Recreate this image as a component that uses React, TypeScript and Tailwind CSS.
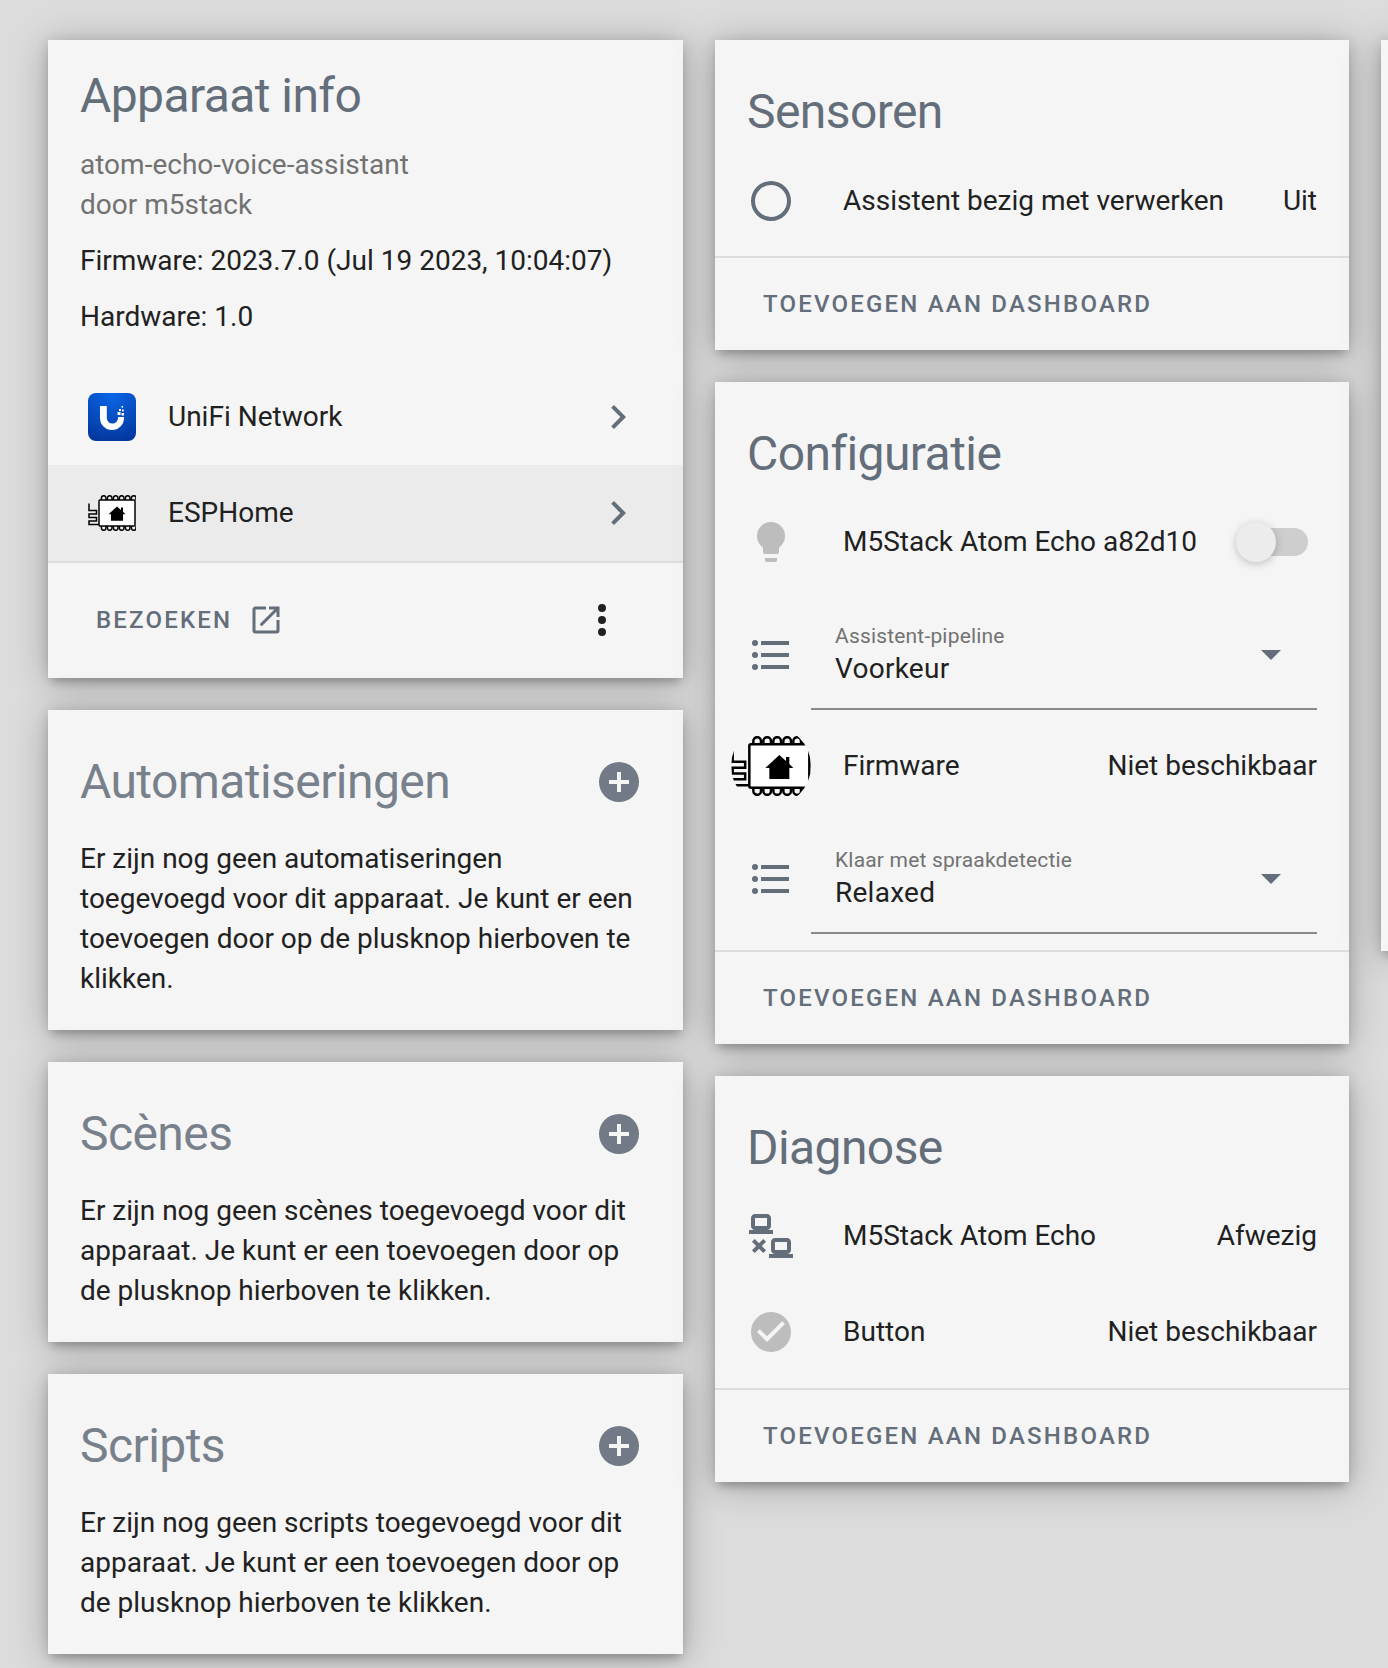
import React from 'react';

const mdi = {
  chevron: 'M8.59,16.58L13.17,12L8.59,7.41L10,6L16,12L10,18L8.59,16.58Z',
  openNew: 'M14,3V5H17.59L7.76,14.83L9.17,16.24L19,6.41V10H21V3M19,19H5V5H12V3H5C3.89,3 3,3.9 3,5V19A2,2 0 0,0 5,21H19A2,2 0 0,0 21,19V12H19V19Z',
  dots: 'M12,16A2,2 0 0,1 14,18A2,2 0 0,1 12,20A2,2 0 0,1 10,18A2,2 0 0,1 12,16M12,10A2,2 0 0,1 14,12A2,2 0 0,1 12,14A2,2 0 0,1 10,12A2,2 0 0,1 12,10M12,4A2,2 0 0,1 14,6A2,2 0 0,1 12,8A2,2 0 0,1 10,6A2,2 0 0,1 12,4Z',
  plus: 'M17,13H13V17H11V13H7V11H11V7H13V11H17M12,2A10,10 0 0,0 2,12A10,10 0 0,0 12,22A10,10 0 0,0 22,12A10,10 0 0,0 12,2Z',
  circle: 'M12,20A8,8 0 0,1 4,12A8,8 0 0,1 12,4A8,8 0 0,1 20,12A8,8 0 0,1 12,20M12,2A10,10 0 0,0 2,12A10,10 0 0,0 12,22A10,10 0 0,0 22,12A10,10 0 0,0 12,2Z',
  bulb: 'M12,2A7,7 0 0,0 5,9C5,11.38 6.19,13.47 8,14.74V17A1,1 0 0,0 9,18H15A1,1 0 0,0 16,17V14.74C17.81,13.47 19,11.38 19,9A7,7 0 0,0 12,2M9,21A1,1 0 0,0 10,22H14A1,1 0 0,0 15,21V20H9V21Z',
  list: 'M7,5H21V7H7V5M7,13V11H21V13H7M4,4.5A1.5,1.5 0 0,1 5.5,6A1.5,1.5 0 0,1 4,7.5A1.5,1.5 0 0,1 2.5,6A1.5,1.5 0 0,1 4,4.5M4,10.5A1.5,1.5 0 0,1 5.5,12A1.5,1.5 0 0,1 4,13.5A1.5,1.5 0 0,1 2.5,12A1.5,1.5 0 0,1 4,10.5M7,19V17H21V19H7M4,16.5A1.5,1.5 0 0,1 5.5,18A1.5,1.5 0 0,1 4,19.5A1.5,1.5 0 0,1 2.5,18A1.5,1.5 0 0,1 4,16.5Z',
  check: 'M12 2C6.5 2 2 6.5 2 12S6.5 22 12 22 22 17.5 22 12 17.5 2 12 2M10 17L5 12L6.41 10.59L10 14.17L17.59 6.58L19 8L10 17Z',
  lan: 'M4,1C2.89,1 2,1.89 2,3V7C2,8.11 2.89,9 4,9H1V11H13V9H10C11.11,9 12,8.11 12,7V3C12,1.89 11.11,1 10,1H4M4,3H10V7H4V3M14,13C12.89,13 12,13.89 12,15V19C12,20.11 12.89,21 14,21H11V23H23V21H20C21.11,21 22,20.11 22,19V15C22,13.89 21.11,13 20,13H14M3.88,13.46L2.46,14.88L4.59,17L2.46,19.12L3.88,20.54L6,18.41L8.12,20.54L9.54,19.12L7.41,17L9.54,14.88L8.12,13.46L6,15.59L3.88,13.46M14,15H20V19H14V15Z',
  menuDown: 'M7,10L12,15L17,10H7Z',
};

const Icon = ({ d, className }: { d: string; className: string }) => (
  <svg viewBox="0 0 24 24" className={className} fill="currentColor">
    <path d={d} />
  </svg>
);

const UnifiLogo = () => (
  <svg viewBox="0 0 48 48" className="w-12 h-12 shrink-0">
    <defs>
      <radialGradient id="uni" cx="0.5" cy="0" r="1">
        <stop offset="0" stopColor="#0a68ea" />
        <stop offset="1" stopColor="#0438a0" />
      </radialGradient>
    </defs>
    <rect width="48" height="48" rx="8" fill="url(#uni)" />
    <path d="M12 13V25a12 12 0 0 0 24 0V24H30V25a5.6 5.6 0 0 1-11.2 0V13Z" fill="#fff" />
    <g fill="#fff">
      <rect x="33.5" y="13" width="1.6" height="1.6" />
      <rect x="31" y="16" width="2" height="2" />
      <rect x="34" y="16.5" width="1.8" height="1.8" />
      <rect x="29.5" y="19" width="3" height="3" />
      <rect x="33.5" y="20" width="2.5" height="2.5" />
    </g>
  </svg>
);

const pinsX = [13.4, 19.4, 25.4, 31.4, 37.4, 43.4];

const EspLogo = ({ className }: { className: string }) => (
  <svg viewBox="0 0 48 36" className={className}>
    <g fill="none" stroke="#000" strokeWidth="1.5">
      {pinsX.map(x => <path key={x} d={`M${x} 5V3a2.3 2.3 0 0 1 4.6 0V5`} />)}
      {pinsX.map(x => <path key={x} d={`M${x} 31V33a2.3 2.3 0 0 0 4.6 0V31`} />)}
      <rect x="11" y="5" width="36" height="26" rx="1" fill="#fff" />
      <path d="M11 29.5H1V26H8.5V22.5H1V19H8.5V15.5H1V8.5" />
    </g>
    <path d="M29 11.4L33 15V12.6H35V16.8L37.4 19.2H35V25.8H23V19.2H20.6Z" fill="#000" />
  </svg>
);

const shadow = 'bg-[#f5f5f5] shadow-[0_4px_36px_rgba(0,0,0,0.26),0_2px_12px_rgba(0,0,0,0.14),0_8px_8px_-4px_rgba(0,0,0,0.16)]';

const Title = ({ children, light }: { children: React.ReactNode; light?: boolean }) => (
  <h1 className={`text-[48px] leading-[64px] font-normal tracking-[-0.576px] ${light ? 'text-[#78818b]' : 'text-[#636e7a]'}`}>{children}</h1>
);

const EmptyCard = ({ title, lines }: { title: string; lines: string[] }) => (
  <section className={shadow}>
    <div className="h-[129px] pl-8 pr-[40px] pt-10 flex items-start justify-between">
      <Title light>{title}</Title>
      <Icon d={mdi.plus} className="w-12 h-12 mt-2 text-[#727a87]" />
    </div>
    <div className="px-8 pb-[31px] text-[28px] leading-10 text-[#212121]">
      {lines.map(l => <p key={l}>{l}</p>)}
    </div>
  </section>
);

const EntityRow = ({ icon, label, value }: { icon: React.ReactNode; label: string; value?: React.ReactNode }) => (
  <div className="h-[96px] pl-8 pr-8 flex items-center text-[28px] text-[#212121]">
    <div className="w-12 h-12 flex items-center justify-center shrink-0">{icon}</div>
    <span className="ml-12 flex-1">{label}</span>
    {value}
  </div>
);

const SelectRow = ({ label, value }: { label: string; value: string }) => (
  <div className="h-[120px] pl-8 pr-8 flex items-start">
    <Icon d={mdi.list} className="w-12 h-12 mt-[41px] text-[#636e7a] shrink-0" />
    <div className="relative flex-1 ml-4 h-[120px] border-b-2 border-[#8a8a8a] pl-6 pt-[32px]">
      <div className="text-[21px] leading-7 tracking-[0.18px] text-[#727272]">{label}</div>
      <div className="text-[28px] leading-[38px] tracking-[0.26px] text-[#212121]">{value}</div>
      <Icon d={mdi.menuDown} className="absolute right-[22px] top-[40px] w-12 h-12 text-[#636e7a]" />
    </div>
  </div>
);

const Actions = () => (
  <div className="border-t-2 border-[#dcdcdc] h-[94px] pl-12 flex items-center">
    <span className="text-[24px] font-medium tracking-[2.2px] text-[#636e7a]">TOEVOEGEN AAN DASHBOARD</span>
  </div>
);

const App: React.FC = () => {
  return (
    <div className="w-[1388px] h-[1668px] overflow-hidden bg-[#dcdcdc] pt-10 pl-12 flex gap-8 items-start font-['Roboto',sans-serif]">
      <div className="w-[635px] shrink-0 flex flex-col gap-8">
        <section className={shadow}>
          <div className="px-8 pt-6 h-[329px]">
            <Title>Apparaat info</Title>
            <div className="mt-[17px] text-[28px] leading-10 text-[#727272]">
              <p>atom-echo-voice-assistant</p>
              <p>door m5stack</p>
            </div>
            <p className="mt-4 text-[28px] leading-10 text-[#212121]">Firmware: 2023.7.0 (Jul 19 2023, 10:04:07)</p>
            <p className="mt-4 text-[28px] leading-10 text-[#212121]">Hardware: 1.0</p>
          </div>
          <div className="h-[96px] pl-10 pr-[41px] flex items-center text-[28px] text-[#212121]">
            <UnifiLogo />
            <span className="ml-8 flex-1">UniFi Network</span>
            <Icon d={mdi.chevron} className="w-12 h-12 text-[#636e7a]" />
          </div>
          <div className="h-[96px] pl-10 pr-[41px] flex items-center bg-[#ebebeb] text-[28px] text-[#212121]">
            <EspLogo className="w-12 h-9 shrink-0" />
            <span className="ml-8 flex-1">ESPHome</span>
            <Icon d={mdi.chevron} className="w-12 h-12 text-[#636e7a]" />
          </div>
          <div className="border-t-2 border-[#dcdcdc] h-[117px] pb-[2px] pl-12 pr-[57px] flex items-center justify-between">
            <div className="flex items-center">
              <span className="text-[24px] font-medium tracking-[2.2px] text-[#636e7a]">BEZOEKEN</span>
              <Icon d={mdi.openNew} className="w-[36px] h-[36px] ml-[16px] text-[#636e7a]" />
            </div>
            <Icon d={mdi.dots} className="w-12 h-12 text-[#212121]" />
          </div>
        </section>
        <EmptyCard title="Automatiseringen" lines={['Er zijn nog geen automatiseringen', 'toegevoegd voor dit apparaat. Je kunt er een', 'toevoegen door op de plusknop hierboven te', 'klikken.']} />
        <EmptyCard title="Scènes" lines={['Er zijn nog geen scènes toegevoegd voor dit', 'apparaat. Je kunt er een toevoegen door op', 'de plusknop hierboven te klikken.']} />
        <EmptyCard title="Scripts" lines={['Er zijn nog geen scripts toegevoegd voor dit', 'apparaat. Je kunt er een toevoegen door op', 'de plusknop hierboven te klikken.']} />
      </div>

      <div className="w-[634px] shrink-0 flex flex-col gap-8">
        <section className={shadow}>
          <div className="h-[113px] pl-8 pt-10"><Title>Sensoren</Title></div>
          <EntityRow icon={<Icon d={mdi.circle} className="w-12 h-12 text-[#636e7a]" />} label="Assistent bezig met verwerken" value={<span>Uit</span>} />
          <div className="h-[7px]" />
          <Actions />
        </section>
        <section className={shadow}>
          <div className="h-[112px] pl-8 pt-10"><Title>Configuratie</Title></div>
          <EntityRow
            icon={<Icon d={mdi.bulb} className="w-12 h-12 text-[#bdbdbd]" />}
            label="M5Stack Atom Echo a82d10"
            value={
              <div className="relative w-[68px] h-7 mr-[9px] rounded-full bg-[#cecece]">
                <div className="absolute -left-[4px] -top-[6px] w-10 h-10 rounded-full bg-[#ececec] shadow-[0_2px_8px_rgba(0,0,0,0.22)]" />
              </div>
            }
          />
          <SelectRow label="Assistent-pipeline" value="Voorkeur" />
          <div className="mt-2 h-[96px] pr-8 flex items-center text-[28px] text-[#212121]">
            <div className="w-[80px] h-[80px] ml-4 rounded-full overflow-hidden flex items-center justify-center shrink-0">
              <EspLogo className="w-[80px] h-[60px] shrink-0" />
            </div>
            <span className="ml-8 flex-1">Firmware</span>
            <span>Niet beschikbaar</span>
          </div>
          <SelectRow label="Klaar met spraakdetectie" value="Relaxed" />
          <div className="h-4" />
          <Actions />
        </section>
        <section className={shadow}>
          <div className="h-[112px] pl-8 pt-10"><Title>Diagnose</Title></div>
          <EntityRow icon={<Icon d={mdi.lan} className="w-12 h-12 text-[#636e7a]" />} label="M5Stack Atom Echo" value={<span>Afwezig</span>} />
          <EntityRow icon={<Icon d={mdi.check} className="w-12 h-12 text-[#bdbdbd]" />} label="Button" value={<span>Niet beschikbaar</span>} />
          <div className="h-2" />
          <Actions />
        </section>
      </div>

      <div className={`w-[635px] h-[911px] shrink-0 ${shadow}`} />
    </div>
  );
};

export default App;
